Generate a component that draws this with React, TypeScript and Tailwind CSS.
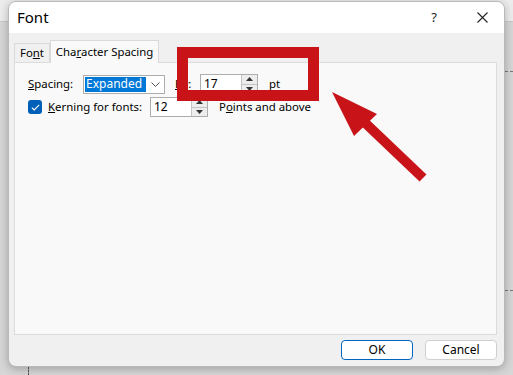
import React from "react";

const font = { fontFamily: '"Noto Sans", "Open Sans", sans-serif' };

function Spin({ value, width }: { value: string; width: string }) {
  return (
    <div className={`flex h-[20px] ${width} border border-[#adadad] bg-white`}>
      <div className="flex flex-1 items-center pl-[3px] text-[12px] text-black">{value}</div>
      <div className="flex w-[16px] flex-col border-l border-[#c4c4c4] bg-[#ededed]">
        <div className="flex flex-1 items-center justify-center border-b border-[#c4c4c4]">
          <svg width="7" height="4" viewBox="0 0 7 4"><path d="M3.5 0L7 4H0z" fill="#333" /></svg>
        </div>
        <div className="flex flex-1 items-center justify-center">
          <svg width="7" height="4" viewBox="0 0 7 4"><path d="M0 0h7L3.5 4z" fill="#333" /></svg>
        </div>
      </div>
    </div>
  );
}

export default function App() {
  return (
    <div style={font} className="relative h-[375px] w-[513px] overflow-hidden bg-[#d6d6d6]">
      {/* backdrop (dimmed document) */}
      <div className="absolute left-0 top-0 h-[22px] w-full border-b border-[#c9c9c9] bg-[#ececec]" />
      <div className="absolute left-[28px] top-[366px] h-[10px] border-l border-dashed border-[#555]" />
      <div className="absolute right-0 top-[71px] w-[8px] border-t border-dashed border-[#777]" />
      <div className="absolute right-0 top-[290px] w-[8px] border-t border-dashed border-[#777]" />

      {/* dialog */}
      <div className="absolute left-[8px] top-[1px] flex h-[366px] w-[497px] flex-col overflow-hidden rounded-[8px] border border-[#b9b9b9] bg-[#f0f0f0] shadow-[0_2px_8px_rgba(0,0,0,0.25)]">
        <div className="flex h-[31px] items-center bg-white pl-[8px] pr-[16px]">
          <span className="text-[15px] text-black">Font</span>
          <span className="ml-auto mr-[40px] text-[13px] text-[#222]">?</span>
          <svg width="11" height="11" viewBox="0 0 11 11">
            <path d="M0.5 0.5L10.5 10.5M10.5 0.5L0.5 10.5" stroke="#222" strokeWidth="1.1" />
          </svg>
        </div>

        <div className="flex flex-1 flex-col pl-[5px] pr-[7px] text-[11.4px]">
          {/* tabs */}
          <div className="mt-[7px] flex h-[22px] items-end">
            <div className="flex h-[19px] w-[36px] items-center justify-center border border-b-0 border-[#d9d9d9] bg-[#f0f0f0] text-black">
              Fo<span className="underline">n</span>t
            </div>
            <div className="relative -mb-px flex h-[23px] w-[109px] items-center justify-center border border-b-0 border-[#d9d9d9] bg-[#f9f9f9] text-black">
              Cha<span className="underline">r</span>acter Spacing
            </div>
          </div>

          {/* panel */}
          <div className="flex h-[273px] flex-col border border-[#dcdcdc] bg-[#f9f9f9] pl-[13px] pt-[11px] text-black">
            <div className="flex h-[20px] items-center">
              <span className="w-[55px]"><span className="underline">S</span>pacing:</span>
              <div className="flex h-[19px] w-[82px] items-center border border-[#adadad] bg-white">
                <span className="ml-[1px] flex h-[15px] w-[61px] items-center bg-[#0078d7] pl-[1px] text-[12px] text-white">Expanded</span>
                <div className="flex flex-1 items-center justify-center">
                  <svg width="9" height="5" viewBox="0 0 9 5"><path d="M0.5 0.5L4.5 4.5L8.5 0.5" fill="none" stroke="#555" /></svg>
                </div>
              </div>
              <span className="ml-[10px] w-[25px]"><span className="underline">B</span>y:</span>
              <Spin value="17" width="w-[58px]" />
              <span className="ml-[11px]">pt</span>
            </div>

            <div className="mt-[3px] flex h-[20px] items-center">
              <span className="flex h-[14px] w-[14px] items-center justify-center rounded-[3px] bg-[#005fb8]">
                <svg width="9" height="7" viewBox="0 0 9 7"><path d="M0.8 3.6L3.2 6L8.2 0.8" fill="none" stroke="white" strokeWidth="1.1" /></svg>
              </span>
              <span className="ml-[6px] w-[102px]"><span className="underline">K</span>erning for fonts:</span>
              <Spin value="12" width="w-[58px]" />
              <span className="ml-[11px]">P<span className="underline">o</span>ints and above</span>
            </div>
          </div>

          {/* buttons */}
          <div className="mt-[5px] flex justify-end gap-[12px]">
            <button className="h-[20px] w-[72px] rounded-[4px] border border-[#0067c0] bg-white text-[12px] text-black">OK</button>
            <button className="h-[20px] w-[72px] rounded-[4px] border border-[#cfcfcf] bg-white text-[12px] text-black">Cancel</button>
          </div>
        </div>
      </div>

      {/* red annotation */}
      <div className="absolute left-[177px] top-[47px] h-[54px] w-[142px] border-[11px] border-[#c81418]" />
      <svg className="absolute left-0 top-0" width="513" height="375" viewBox="0 0 513 375">
        <line x1="423" y1="178" x2="360" y2="118" stroke="#c81418" strokeWidth="10" />
        <path d="M332 92L377 114L354 136Z" fill="#c81418" />
      </svg>
    </div>
  );
}
